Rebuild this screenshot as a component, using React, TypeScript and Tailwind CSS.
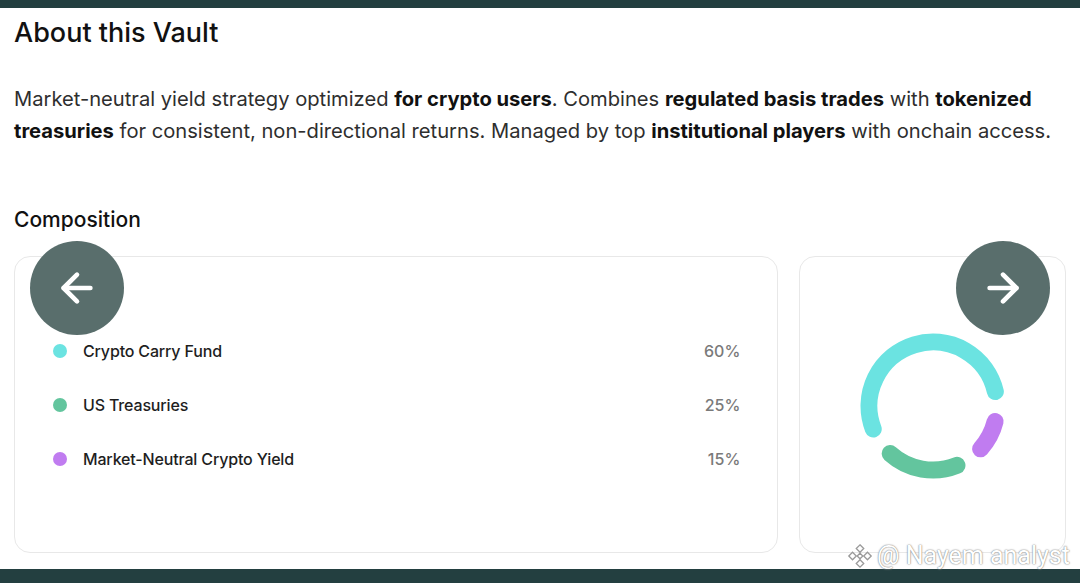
import { ArrowLeft, ArrowRight } from "lucide-react";

const items = [
  { name: "Crypto Carry Fund", pct: "60%", color: "bg-[#6be3e1]" },
  { name: "US Treasuries", pct: "25%", color: "bg-[#63c59e]" },
  { name: "Market-Neutral Crypto Yield", pct: "15%", color: "bg-[#c07cf0]" },
];

// angle in degrees, clockwise from top
function arc(cx: number, cy: number, r: number, a0: number, a1: number) {
  const p = (a: number) => {
    const t = (a * Math.PI) / 180;
    return [cx + r * Math.sin(t), cy - r * Math.cos(t)];
  };
  const [x0, y0] = p(a0);
  const [x1, y1] = p(a1);
  const large = a1 - a0 > 180 ? 1 : 0;
  return `M ${x0.toFixed(2)} ${y0.toFixed(2)} A ${r} ${r} 0 ${large} 1 ${x1.toFixed(2)} ${y1.toFixed(2)}`;
}

function Donut() {
  const c = 73;
  const r = 64;
  return (
    <svg width="146" height="146" viewBox="0 0 146 146">
      <path d={arc(c, c, r, 249, 437)} fill="none" stroke="#6be3e1" strokeWidth="17" strokeLinecap="round" />
      <path d={arc(c, c, r, 104, 132)} fill="none" stroke="#c07cf0" strokeWidth="17" strokeLinecap="round" />
      <path d={arc(c, c, r, 158, 222)} fill="none" stroke="#63c59e" strokeWidth="17" strokeLinecap="round" />
    </svg>
  );
}

function Logo() {
  return (
    <svg width="28" height="28" viewBox="0 0 30 30" fill="none" stroke="#9a9a9a" strokeWidth="1.4">
      <path d="M15 3 L19 7 L15 11 L11 7 Z" fill="white" />
      <path d="M7 11 L11 15 L7 19 L3 15 Z" fill="white" />
      <path d="M23 11 L27 15 L23 19 L19 15 Z" fill="white" />
      <path d="M15 19 L19 23 L15 27 L11 23 Z" fill="white" />
      <path d="M15 12 L18 15 L15 18 L12 15 Z" fill="white" />
    </svg>
  );
}

export default function App() {
  return (
    <div className="relative flex h-[583px] w-[1080px] flex-col overflow-hidden bg-white font-['Inter',sans-serif] text-[#1a1a1a]">
      <div className="h-2 shrink-0 bg-[#233f40]" />
      <main className="flex-1 px-[14px]">
        <h1 className="mt-[9px] text-[27px] leading-8 font-medium text-[#111]">About this Vault</h1>
        <p className="mt-[34px] text-[20.15px] leading-8 text-[#2e2e2e]">
          Market-neutral yield strategy optimized <b className="font-bold text-[#111]">for crypto users</b>. Combines{" "}
          <b className="font-bold text-[#111]">regulated basis trades</b> with <b className="font-bold text-[#111]">tokenized treasuries</b> for
          consistent, non-directional returns. Managed by top <b className="font-bold text-[#111]">institutional players</b> with onchain access.
        </p>
        <h2 className="mt-[59px] text-[21px] leading-7 font-medium text-[#111]">Composition</h2>
        <div className="mt-[22px] flex gap-[21px]">
          <div className="h-[297px] w-[765px] rounded-2xl border border-[#e8e8e8] pr-[37px] pl-[38px] pt-[84px]">
            <div className="grid gap-[34px]">
              {items.map((it) => (
                <div key={it.name} className="flex h-5 items-center">
                  <span className={`h-[14px] w-[14px] rounded-full ${it.color}`} />
                  <span className="ml-[16px] flex-1 text-[16px] font-medium tracking-[-0.01em] text-[#1e1e1e]">{it.name}</span>
                  <span className="text-[16px] font-medium text-[#7a7a7a]">{it.pct}</span>
                </div>
              ))}
            </div>
          </div>
          <div className="flex h-[297px] w-[267px] items-center justify-center rounded-2xl border border-[#e8e8e8] pt-[2px]">
            <Donut />
          </div>
        </div>
      </main>
      <div className="h-[14px] shrink-0 bg-[#233f40]" />

      <button className="absolute left-[30px] top-[241px] flex h-[94px] w-[94px] items-center justify-center rounded-full bg-[#596e6c] text-white">
        <ArrowLeft size={46} strokeWidth={2.4} />
      </button>
      <button className="absolute left-[956px] top-[241px] flex h-[94px] w-[94px] items-center justify-center rounded-full bg-[#596e6c] text-white">
        <ArrowRight size={46} strokeWidth={2.4} />
      </button>
      <div className="absolute left-[846px] top-[540px] flex items-center gap-[3px] font-['Roboto',sans-serif] text-[25px] leading-8 text-white [text-shadow:0_0_1px_#777,0_0_2px_#999]">
        <Logo />
        <span>@ Nayem analyst</span>
      </div>
    </div>
  );
}
